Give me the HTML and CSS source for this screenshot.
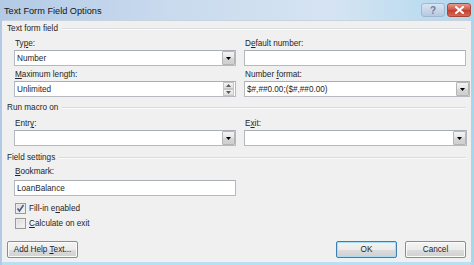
FILE: index.html
```html
<!DOCTYPE html>
<html>
<head>
<meta charset="utf-8">
<link rel="stylesheet" href="styles.css">
</head>
<body>
<div class="window">
  <div class="titlebar">
    <span class="title">Text Form Field Options</span>
    <div class="tb-buttons">
      <span class="tb-btn tb-help">?</span>
      <span class="tb-btn tb-close"><svg width="9" height="8" viewBox="0 0 9 8"><path d="M1 1 L8 7 M8 1 L1 7" stroke="#fff" stroke-width="2" stroke-linecap="square"/></svg></span>
    </div>
  </div>
  <div class="body">
    <div class="group-head"><span>Text form field</span></div>
    <div class="grid">
      <div class="field">
        <div class="label">Ty<u>p</u>e:</div>
        <div class="box select"><span class="val">Number</span><span class="dd"><svg width="5" height="3" viewBox="0 0 5 3"><path d="M0 0 H5 L2.5 3 Z" fill="#000"/></svg></span></div>
      </div>
      <div class="field">
        <div class="label">D<u>e</u>fault number:</div>
        <div class="box"></div>
      </div>
      <div class="field">
        <div class="label"><u>M</u>aximum length:</div>
        <div class="box spin"><span class="val">Unlimited</span>
          <span class="spinner">
            <span class="sp"><svg width="5" height="3" viewBox="0 0 5 3"><path d="M0 3 H5 L2.5 0 Z" fill="#5a5a5a"/></svg></span>
            <span class="sp"><svg width="5" height="3" viewBox="0 0 5 3"><path d="M0 0 H5 L2.5 3 Z" fill="#5a5a5a"/></svg></span>
          </span>
        </div>
      </div>
      <div class="field">
        <div class="label">Number <u>f</u>ormat:</div>
        <div class="box select wide4"><span class="val">$#,##0.00;($#,##0.00)</span><span class="dd"><svg width="5" height="3" viewBox="0 0 5 3"><path d="M0 0 H5 L2.5 3 Z" fill="#000"/></svg></span></div>
      </div>
    </div>

    <div class="group-head gh2"><span>Run macro on</span></div>
    <div class="grid g2">
      <div class="field">
        <div class="label">Entr<u>y</u>:</div>
        <div class="box select"><span class="val"></span><span class="dd"><svg width="5" height="3" viewBox="0 0 5 3"><path d="M0 0 H5 L2.5 3 Z" fill="#000"/></svg></span></div>
      </div>
      <div class="field">
        <div class="label">E<u>x</u>it:</div>
        <div class="box select wide1"><span class="val"></span><span class="dd"><svg width="5" height="3" viewBox="0 0 5 3"><path d="M0 0 H5 L2.5 3 Z" fill="#000"/></svg></span></div>
      </div>
    </div>

    <div class="group-head gh3"><span>Field settings</span></div>
    <div class="settings">
      <div class="label"><u>B</u>ookmark:</div>
      <div class="box bookmark"><span class="val">LoanBalance</span></div>
      <div class="check c1">
        <span class="cb"><svg width="9" height="9" viewBox="0 0 9 9"><path d="M1.5 4.5 L3.5 7 L7.5 1" stroke="#4b5a86" stroke-width="1.6" fill="none"/></svg></span>
        <span>Fill-in e<u>n</u>abled</span>
      </div>
      <div class="check c2">
        <span class="cb"></span>
        <span><u>C</u>alculate on exit</span>
      </div>
    </div>

    <div class="buttons">
      <button class="btn help">Add Help <u>T</u>ext...</button>
      <div class="spacer"></div>
      <button class="btn ok">OK</button>
      <button class="btn cancel">Cancel</button>
    </div>
  </div>
</div>
</body>
</html>
```

FILE: styles.css
```css
* { box-sizing: border-box; }
html, body { margin: 0; padding: 0; }
body {
  width: 474px;
  height: 265px;
  overflow: hidden;
  font-family: "Liberation Sans", Arial, sans-serif;
  font-size: 8.2px;
  color: #262626;
  background: #f0f0f0;
}
u { text-decoration: underline; text-underline-offset: 1px; }
.window {
  width: 474px;
  height: 265px;
  display: flex;
  flex-direction: column;
  background: linear-gradient(90deg, #b3cae6 0%, #c9daee 35%, #d6e4f2 70%, #aed8ee 100%);
}
.titlebar {
  height: 20px;
  display: flex;
  align-items: center;
  padding-left: 4px;
  padding-right: 3px;
  flex: none;
}
.title {
  font-size: 9.2px;
  color: #101820;
  flex: 1;
  padding-top: 1px;
}
.tb-buttons {
  display: flex;
  gap: 2px;
  align-self: flex-start;
  margin-top: 3px;
}
.tb-btn {
  width: 24px;
  height: 14px;
  border-radius: 3px;
  display: flex;
  align-items: center;
  justify-content: center;
}
.tb-help {
  background: linear-gradient(#d8e4f2, #b7c9e0);
  border: 1px solid #a3b6cf;
  color: #6b7f9c;
  font-size: 10px;
  font-weight: bold;
}
.tb-close {
  background: linear-gradient(#e59a8e, #cf5443 50%, #c13d2d 51%, #d66a55);
  border: 1px solid #a8463a;
}
.body {
  flex: 1;
  margin-left: 2px;
  margin-right: 3px;
  margin-bottom: 3px;
  background: #f0f0f0;
  border-top: 1px solid #c8d3e0;
  padding: 2px 5px 0 5px;
  display: flex;
  flex-direction: column;
  box-shadow: 0 3px 0 #b9e0f2, 3px 0 0 #a8d6ee;
}
.group-head {
  height: 12px;
  line-height: 12px;
  display: flex;
  align-items: center;
  gap: 4px;
}
.group-head::after {
  content: "";
  flex: 1;
  height: 0;
  border-top: 1px solid #d9dcdf;
  border-bottom: 1px solid #fbfbfb;
}
.gh2 { margin-top: 5px; }
.gh3 { margin-top: 6px; }
.grid {
  margin-top: 3px;
  padding-left: 7px;
  display: grid;
  grid-template-columns: 222px 222px;
  column-gap: 8px;
  row-gap: 3px;
}
.g2 { margin-top: 4px; }
.field { display: flex; flex-direction: column; }
.label { height: 12px; line-height: 12px; padding-left: 1px; }
.box {
  height: 16px;
  background: #fff;
  border: 1px solid #b6b9bf;
  border-top-color: #a9adb4;
  display: flex;
  align-items: center;
  padding-left: 2px;
  color: #262626;
}
.box .val { flex: 1; white-space: nowrap; overflow: hidden; }
.wide4 { width: 226px; }
.wide1 { width: 223px; }
.dd {
  width: 13px;
  height: 14px;
  border: 1px solid #b5b5b5;
  border-radius: 1px;
  background: linear-gradient(#f4f4f4, #e4e4e4 50%, #d6d6d6 51%, #cfcfcf);
  display: flex;
  align-items: center;
  justify-content: center;
}
.spinner {
  width: 11px;
  height: 14px;
  margin-right: 1px;
  display: flex;
  flex-direction: column;
}
.sp {
  flex: 1;
  border: 1px solid #c6c6c6;
  background: linear-gradient(#f5f5f5, #dedede);
  display: flex;
  align-items: center;
  justify-content: center;
}
.settings {
  padding-left: 7px;
  display: flex;
  flex-direction: column;
}
.settings .label { margin-top: 2px; }
.bookmark { width: 222px; margin-top: 2px; }
.check {
  height: 12px;
  display: flex;
  align-items: center;
  gap: 3px;
  padding-left: 1px;
}
.c1 { margin-top: 6px; }
.c2 { margin-top: 3px; }
.cb {
  width: 11px;
  height: 11px;
  border: 1px solid #9a9a9a;
  background: linear-gradient(135deg, #d9d9d9, #f7f7f7);
  box-shadow: inset 0 0 0 1px #ececec;
  display: flex;
  align-items: center;
  justify-content: center;
}
.buttons {
  margin-top: 12px;
  height: 17px;
  display: flex;
  gap: 8px;
}
.spacer { flex: 1; }
.btn {
  font-family: "Liberation Sans", Arial, sans-serif;
  font-size: 8.2px;
  color: #1e1e1e;
  height: 17px;
  padding: 0;
  border: 1px solid #8c8c8c;
  border-radius: 2px;
  background: linear-gradient(#f4f4f4, #ebebeb 50%, #dddddd 51%, #d0d0d0);
  box-shadow: inset 0 0 0 1px #fbfbfb;
}
.help { width: 71px; }
.ok {
  width: 61px;
  border-color: #3c7fb1;
  box-shadow: inset 0 0 0 1px #a9dcf5;
}
.cancel { width: 61px; }
```
